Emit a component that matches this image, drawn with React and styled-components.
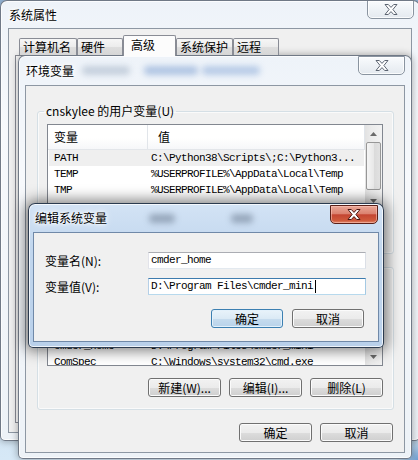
import styled, { createGlobalStyle, css } from "styled-components";

const uiFont = `"Noto Sans CJK SC", "Liberation Sans", sans-serif`;
const monoFont = `"Liberation Mono", "DejaVu Sans Mono", monospace`;

const GlobalStyle = createGlobalStyle`
  html, body { margin: 0; padding: 0; }
  body {
    font-family: ${uiFont};
    font-size: 12px;
    color: #000;
    overflow: hidden;
  }
  * { box-sizing: border-box; }
`;

const Desktop = styled.div`
  position: relative;
  width: 418px;
  height: 460px;
  overflow: hidden;
  background:
    radial-gradient(circle at 100% 100%, #6f9fd2 0, transparent 22px),
    linear-gradient(180deg, #9dbfe3 0%, #bcd6ee 40%, #d6e8f6 100%);
`;

// a desktop window, placed where it sits on the screen
const Window = styled.div`
  position: absolute;
  left: ${(p) => p.$x}px;
  top: ${(p) => p.$y}px;
  width: ${(p) => p.$w}px;
  height: ${(p) => p.$h}px;
  display: flex;
  flex-direction: column;
  border: 1px solid ${(p) => (p.$active ? "rgba(28,42,62,0.9)" : "rgba(70,80,96,0.75)")};
  border-radius: 7px 7px 5px 5px;
  background: ${(p) =>
    p.$active
      ? "linear-gradient(180deg, #d3e3f5 0%, #c2d7ee 30%, #b9d0ea 100%)"
      : "linear-gradient(180deg, #eef3f9 0%, #f7f9fc 30%, #edf2f7 100%)"};
  box-shadow: inset 0 0 0 1px rgba(255, 255, 255, 0.75),
    ${(p) => (p.$active ? "0 0 14px 3px rgba(0,0,0,0.5)" : "0 0 7px 1px rgba(0,0,0,0.28)")};
`;

const TitleBar = styled.div`
  height: ${(p) => p.$h}px;
  flex: none;
  display: flex;
  align-items: center;
  padding-left: ${(p) => p.$indent}px;
  overflow: hidden;
`;

const Title = styled.span`
  flex: none;
  font-size: 12px;
  line-height: 16px;
  text-shadow: 0 0 5px #fff, 0 0 3px #fff, 0 0 9px #fff;
`;

const Smudge = styled.span`
  flex: none;
  width: ${(p) => p.$w}px;
  height: 9px;
  margin-left: ${(p) => p.$ml}px;
  border-radius: 4px;
  background: ${(p) => p.$c};
  filter: blur(3px);
  opacity: 0.5;
`;

const CloseButton = styled.div`
  flex: none;
  align-self: flex-start;
  margin-left: auto;
  margin-top: ${(p) => p.$mt}px;
  margin-right: ${(p) => p.$mr}px;
  width: ${(p) => p.$w}px;
  height: 19px;
  display: flex;
  align-items: center;
  justify-content: center;
  border: 1px solid ${(p) => (p.$active ? "#5a2018" : "#8a94a0")};
  border-radius: 0 0 5px 5px;
  background: ${(p) =>
    p.$active
      ? "linear-gradient(180deg, #e9a797 0%, #dc8270 45%, #c44532 52%, #cf5a3c 85%, #e0886a 100%)"
      : "linear-gradient(180deg, #f9fbfd 0%, #eef2f6 50%, #e4e9ef 100%)"};
  box-shadow: inset 0 0 0 1px ${(p) => (p.$active ? "rgba(255,200,190,0.55)" : "rgba(255,255,255,0.8)")};
`;

const CloseGlyph = ({ active }) => (
  <svg width="14" height="11" viewBox="0 0 14 11">
    <path
      d="M1 0.5h3.3L7 3.4 9.7 0.5H13L8.9 5.5 13 10.5H9.7L7 7.6 4.3 10.5H1L5.1 5.5Z"
      fill="#fff"
      stroke={active ? "#4a1712" : "#5d6572"}
      strokeWidth="1"
      strokeLinejoin="round"
    />
  </svg>
);

const Client = styled.div`
  flex: 1;
  min-height: 0;
  display: flex;
  flex-direction: column;
  margin: ${(p) => p.$margin};
  padding: ${(p) => p.$pad || "0"};
  background: #f0f0f0;
  border: 1px solid ${(p) => (p.$active ? "#7089a8" : "#8d97a3")};
`;

/* ---------- tabs of the outer window ---------- */

const TabRow = styled.div`
  display: flex;
  align-items: flex-end;
  height: 21px;
  margin: 6px 0 -1px 10px;
  position: relative;
  z-index: 1;
`;

const Tab = styled.div`
  width: ${(p) => p.$w}px;
  display: flex;
  align-items: center;
  font-size: 12px;
  line-height: 14px;
  white-space: nowrap;
  border: 1px solid #898c95;
  border-bottom: none;
  border-radius: 2px 2px 0 0;
  ${(p) =>
    p.$selected
      ? css`
          height: 21px;
          padding: 0 0 3px 7px;
          background: #fcfcfc;
        `
      : css`
          height: 17px;
          margin-bottom: 1px;
          padding-left: 3px;
          background: linear-gradient(180deg, #f6f6f6 0%, #ececec 50%, #dedede 51%, #d6d6d6 100%);
        `}
`;

const TabPanel = styled.div`
  flex: 1;
  margin: 0 5px 9px 6px;
  background: #fcfcfc;
  border: 1px solid #898c95;
`;

/* ---------- group boxes and list views ---------- */

const Group = styled.fieldset`
  flex: none;
  min-width: 0;
  margin: ${(p) => p.$mt}px 10px 0 11px;
  padding: 5px 10px 12px 9px;
  border: 1px solid #d5dfe5;
  border-radius: 3px;
  box-shadow: inset 0 0 0 1px #fafafa;
`;

const Legend = styled.legend`
  margin-left: -3px;
  padding: 0 2px;
  font-size: 12px;
  line-height: 16px;
`;

const ListBox = styled.div`
  display: flex;
  height: 86px;
  border: 1px solid #828790;
  background: #fff;
  overflow: hidden;
`;

const ListMain = styled.div`
  flex: 1;
  min-width: 0;
  display: flex;
  flex-direction: column;
  overflow: hidden;
`;

const HeaderRow = styled.div`
  flex: none;
  display: flex;
  height: 25px;
  background: linear-gradient(180deg, #ffffff 0%, #ffffff 55%, #f6f7f9 100%);
  border-bottom: 1px solid #e3e6ea;
`;

const HeadCell = styled.div`
  width: ${(p) => p.$w}px;
  flex: none;
  padding-left: ${(p) => p.$indent}px;
  border-right: 1px solid #e1e5ea;
  font-size: 12px;
  line-height: 24px;
`;

const Row = styled.div`
  flex: none;
  display: flex;
  height: 16px;
  margin: 0 1px;
  font-family: ${monoFont};
  font-size: 11px;
  letter-spacing: -0.6px;
  line-height: 16px;
  white-space: nowrap;
  background: ${(p) => (p.$selected ? "#efefef" : "transparent")};
`;

const NameCell = styled.div`
  width: 99px;
  flex: none;
  padding-left: 5px;
  overflow: hidden;
`;

const ValueCell = styled.div`
  flex: 1;
  padding-left: 3px;
  overflow: hidden;
`;

const ScrollBar = styled.div`
  width: 17px;
  flex: none;
  display: flex;
  flex-direction: column;
  background: linear-gradient(90deg, #e2e2e2 0%, #ebebeb 35%, #f2f2f2 100%);
`;

const ScrollArrow = styled.div`
  height: 17px;
  flex: none;
  display: flex;
  align-items: center;
  justify-content: center;
`;

const ScrollTrack = styled.div`
  flex: 1;
  display: flex;
  flex-direction: column;
  justify-content: ${(p) => (p.$atTop ? "flex-start" : "center")};
`;

const Thumb = styled.div`
  height: ${(p) => p.$h}px;
  margin: 0 1px;
  border: 1px solid #979797;
  border-radius: 2px;
  background: linear-gradient(90deg, #f5f5f5 0%, #e8e8e8 50%, #dadada 51%, #e1e1e1 100%);
`;

const Arrow = ({ up }) => (
  <svg width="7" height="4" viewBox="0 0 7 4">
    <path d={up ? "M0 4L3.5 0 7 4Z" : "M0 0L3.5 4 7 0Z"} fill="#6a6a6a" />
  </svg>
);

const VarList = ({ rows, atTop, thumb }) => (
  <ListBox>
    <ListMain>
      <HeaderRow>
        <HeadCell $w={100} $indent={6}>变量</HeadCell>
        <HeadCell $w={217} $indent={10}>值</HeadCell>
      </HeaderRow>
      {rows.map((r) => (
        <Row key={r.name} $selected={r.selected}>
          <NameCell>{r.name}</NameCell>
          <ValueCell>{r.value}</ValueCell>
        </Row>
      ))}
    </ListMain>
    <ScrollBar>
      <ScrollArrow>
        <Arrow up />
      </ScrollArrow>
      <ScrollTrack $atTop={atTop}>
        <Thumb $h={thumb} />
      </ScrollTrack>
      <ScrollArrow>
        <Arrow />
      </ScrollArrow>
    </ScrollBar>
  </ListBox>
);

/* ---------- buttons and fields ---------- */

const ButtonRow = styled.div`
  display: flex;
  justify-content: flex-end;
  gap: ${(p) => p.$gap || 8}px;
  margin-top: ${(p) => p.$mt}px;
  margin-right: ${(p) => p.$mr || 0}px;
`;

const Button = styled.button`
  width: ${(p) => p.$w || 73}px;
  height: 19px;
  padding: 0;
  font-family: ${uiFont};
  font-size: 12px;
  line-height: 17px;
  color: #000;
  border: 1px solid ${(p) => (p.$default ? "#3c7fb1" : "#707070")};
  border-radius: 3px;
  background: ${(p) =>
    p.$default
      ? "linear-gradient(180deg, #e9f3fa 0%, #dbeaf5 50%, #c6dcee 51%, #b9d3ea 100%)"
      : "linear-gradient(180deg, #f2f2f2 0%, #ebebeb 50%, #dddddd 51%, #cfcfcf 100%)"};
  box-shadow: inset 0 0 0 1px ${(p) => (p.$default ? "#e3f1fb" : "#fbfbfb")};
`;

const FieldRow = styled.div`
  display: flex;
  align-items: center;
  margin-top: ${(p) => p.$mt || 0}px;
`;

const FieldLabel = styled.span`
  width: 103px;
  flex: none;
  font-size: 12px;
  line-height: 16px;
`;

const TextBox = styled.div`
  width: 218px;
  height: 17px;
  padding-left: 2px;
  display: flex;
  align-items: center;
  font-family: ${monoFont};
  font-size: 11px;
  letter-spacing: -0.6px;
  line-height: 15px;
  white-space: nowrap;
  background: #fff;
  border: 1px solid;
  border-color: ${(p) =>
    p.$focused ? "#3d7bad #a4c9e3 #b7d9ed #b5cfe7" : "#abadb3 #dbdfe6 #e3e9ef #e2e3ea"};
`;

const Caret = styled.span`
  width: 1px;
  height: 13px;
  margin-left: 2px;
  background: #000;
`;

const userVars = [
  { name: "PATH", value: "C:\\Python38\\Scripts\\;C:\\Python3...", selected: true },
  { name: "TEMP", value: "%USERPROFILE%\\AppData\\Local\\Temp" },
  { name: "TMP", value: "%USERPROFILE%\\AppData\\Local\\Temp" },
];

const systemVars = [
  { name: "ANT_HOME", value: "D:\\apache-ant" },
  { name: "CLASSPATH", value: ".;%JAVA_HOME%\\lib" },
  { name: "cmder_home", value: "D:\\Program Files\\cmder_mini" },
  { name: "ComSpec", value: "C:\\Windows\\system32\\cmd.exe" },
];

const tabs = [
  { label: "计算机名", w: 58 },
  { label: "硬件", w: 46 },
  { label: "高级", w: 53, selected: true },
  { label: "系统保护", w: 57 },
  { label: "远程", w: 46 },
];

export default function App() {
  return (
    <Desktop>
      <GlobalStyle />

      <Window $x={0} $y={0} $w={420} $h={441}>
        <TitleBar $h={27} $indent={8}>
          <Title>系统属性</Title>
          <CloseButton $w={47} $mt={-1} $mr={5}>
            <CloseGlyph />
          </CloseButton>
        </TitleBar>
        <Client $margin="0 7px 7px 7px">
          <TabRow>
            {tabs.map((t) => (
              <Tab key={t.label} $w={t.w} $selected={t.selected}>
                {t.label}
              </Tab>
            ))}
          </TabRow>
          <TabPanel />
        </Client>
      </Window>

      <Window $x={18} $y={55} $w={394} $h={404}>
        <TitleBar $h={29} $indent={7}>
          <Title>环境变量</Title>
          <Smudge $w={48} $ml={8} $c="#9aabc0" />
          <Smudge $w={54} $ml={14} $c="#6f95cc" />
          <Smudge $w={58} $ml={4} $c="#7fa2d4" />
          <CloseButton $w={47} $mt={0} $mr={6}>
            <CloseGlyph />
          </CloseButton>
        </TitleBar>
        <Client $margin="0 6px 5px 6px">
          <Group $mt={17}>
            <Legend>cnskylee 的用户变量(U)</Legend>
            <VarList rows={userVars} atTop thumb={48} />
            <ButtonRow $mt={12}>
              <Button>新建(N)...</Button>
              <Button>编辑(E)...</Button>
              <Button>删除(D)</Button>
            </ButtonRow>
          </Group>
          <Group $mt={5}>
            <Legend>系统变量(S)</Legend>
            <VarList rows={systemVars} thumb={14} />
            <ButtonRow $mt={12}>
              <Button>新建(W)...</Button>
              <Button>编辑(I)...</Button>
              <Button>删除(L)</Button>
            </ButtonRow>
          </Group>
          <ButtonRow $mt={13} $mr={11}>
            <Button>确定</Button>
            <Button>取消</Button>
          </ButtonRow>
        </Client>
      </Window>

      <Window $x={28} $y={203} $w={356} $h={145} $active>
        <TitleBar $h={28} $indent={6}>
          <Title>编辑系统变量</Title>
          <Smudge $w={26} $ml={42} $c="#5f6f84" />
          <Smudge $w={22} $ml={56} $c="#5f6f84" />
          <CloseButton $w={48} $mt={1} $mr={5} $active>
            <CloseGlyph active />
          </CloseButton>
        </TitleBar>
        <Client $margin="0 4px 5px 4px" $pad="19px 12px 13px 11px" $active>
          <FieldRow>
            <FieldLabel>变量名(N):</FieldLabel>
            <TextBox>cmder_home</TextBox>
          </FieldRow>
          <FieldRow $mt={9}>
            <FieldLabel>变量值(V):</FieldLabel>
            <TextBox $focused>
              D:\Program Files\cmder_mini
              <Caret />
            </TextBox>
          </FieldRow>
          <ButtonRow $mt={14} $mr={2} $gap={9}>
            <Button $w={72} $default>确定</Button>
            <Button $w={72}>取消</Button>
          </ButtonRow>
        </Client>
      </Window>
    </Desktop>
  );
}
